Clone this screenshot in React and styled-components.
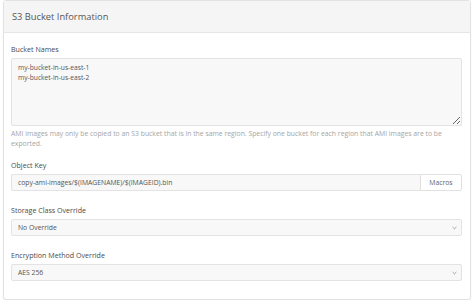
import React from "react";
import styled, { createGlobalStyle } from "styled-components";

const Global = createGlobalStyle`
  html, body { margin: 0; padding: 0; background: #fff; }
  body { font-family: "Open Sans", "Liberation Sans", sans-serif; color: #555; }
  * { box-sizing: border-box; }
`;

const Page = styled.div`
  padding: 0 3px 0 3px;
  width: 474px;
`;

const Card = styled.div`
  width: 468px;
  border: 1px solid #e2e2e2;
  border-radius: 3px;
  background: #fff;
  box-shadow: 0 1px 2px rgba(0,0,0,0.06);
  overflow: hidden;
`;

const Header = styled.div`
  height: 32px;
  background: #f5f5f5;
  border-bottom: 1px solid #e6e6e6;
  display: flex;
  align-items: center;
  padding: 0 8px;
  font-size: 9.3px;
  color: #555;
`;

const Body = styled.div`
  padding: 11px 8px 18px 7px;
  display: flex;
  flex-direction: column;
`;

const Group = styled.div`
  display: flex;
  flex-direction: column;
  margin-bottom: ${(p) => p.$mb ?? 14}px;
`;

const Label = styled.label`
  font-size: 7.1px;
  line-height: 11px;
  font-weight: 500;
  color: #4a4a4a;
  margin-bottom: 3px;
`;

const TextArea = styled.textarea`
  height: 68px;
  width: 100%;
  resize: vertical;
  background: #f8f8f8;
  border: 1px solid #e3e3e3;
  border-radius: 2px;
  padding: 4px 6px;
  font-family: inherit;
  font-size: 6.7px;
  line-height: 10px;
  color: #555;
  outline: none;
`;

const Help = styled.div`
  margin-top: 3px;
  font-size: 6.85px;
  line-height: 10px;
  color: #a5a5a5;
`;

const InputRow = styled.div`
  display: flex;
  height: 17px;
`;

const Input = styled.div`
  flex: 1;
  display: flex;
  align-items: center;
  background: #f8f8f8;
  border: 1px solid #e3e3e3;
  border-right: none;
  border-radius: 2px 0 0 2px;
  padding: 0 6px;
  font-size: 6.8px;
  color: #555;
`;

const AddonButton = styled.div`
  width: 42px;
  display: flex;
  align-items: center;
  justify-content: center;
  background: #fff;
  border: 1px solid #e0e0e0;
  border-radius: 0 2px 2px 0;
  font-size: 6.8px;
  color: #666;
`;

const SelectBox = styled.div`
  position: relative;
  height: 17px;
  display: flex;
  align-items: center;
  background: #f8f8f8;
  border: 1px solid #e3e3e3;
  border-radius: 2px;
  padding: 0 6px;
  font-size: 6.8px;
  color: #555;
`;

const Chevron = styled.svg`
  position: absolute;
  right: 4px;
  top: 6px;
  width: 5px;
  height: 4px;
`;

const Select = ({ children }) => (
  <SelectBox>
    {children}
    <Chevron viewBox="0 0 6 4">
      <path d="M0.7 0.8 L3 3 L5.3 0.8" fill="none" stroke="#888" strokeWidth="0.9" />
    </Chevron>
  </SelectBox>
);

export default function App() {
  return (
    <Page>
      <Global />
      <Card>
        <Header>S3 Bucket Information</Header>
        <Body>
          <Group $mb={11}>
            <Label>Bucket Names</Label>
            <TextArea
              defaultValue={"my-bucket-in-us-east-1\nmy-bucket-in-us-east-2"}
            />
            <Help>
              AMI images may only be copied to an S3 bucket that is in the same region. Specify one bucket for each region that AMI images are to be exported.
            </Help>
          </Group>
          <Group>
            <Label>Object Key</Label>
            <InputRow>
              <Input>copy-ami-images/$(IMAGENAME)/$(IMAGEID).bin</Input>
              <AddonButton>Macros</AddonButton>
            </InputRow>
          </Group>
          <Group>
            <Label>Storage Class Override</Label>
            <Select>No Override</Select>
          </Group>
          <Group $mb={0}>
            <Label>Encryption Method Override</Label>
            <Select>AES 256</Select>
          </Group>
        </Body>
      </Card>
    </Page>
  );
}
